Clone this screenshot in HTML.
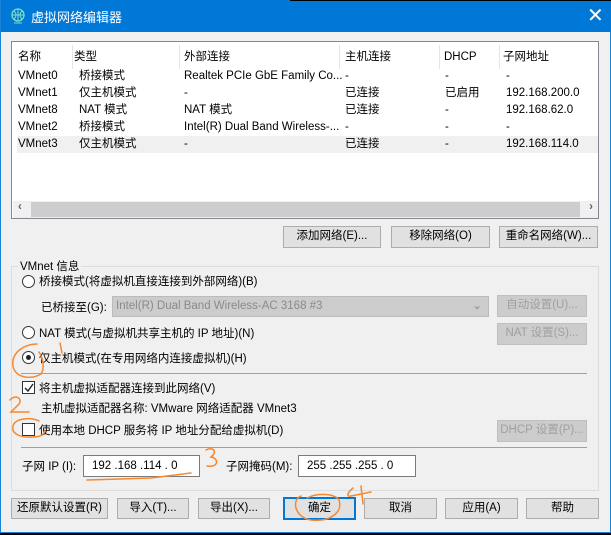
<!DOCTYPE html><html><head><meta charset="utf-8"><style>
*{margin:0;padding:0;box-sizing:border-box}
body{width:611px;height:535px;background:#000;font-family:"Liberation Sans","Noto Sans CJK SC",sans-serif;font-size:11.5px;color:#000;position:relative;overflow:hidden}
.win{position:absolute;left:0;top:0;width:611px;height:533px;background:#f0f0f0;border:1px solid #1883d7;border-top:none}
.title{position:absolute;left:0;top:0;width:611px;height:32px;background:#0078d7;color:#fff;font-size:13px}
.a{position:absolute;white-space:nowrap}
.btn{position:absolute;background:#e1e1e1;border:1px solid #adadad;text-align:center;line-height:19px;font-size:11.5px}
.dis{color:#a0a0a0;background:#ccc;border-color:#bfbfbf}
.list{position:absolute;left:10px;top:41px;width:588px;height:178px;background:#fff;border:1px solid #828790}
.row{position:absolute;left:0;height:17px;width:586px;line-height:17px}
.row span{position:absolute}
.radio{position:absolute;width:13px;height:13px;border:1px solid #333;border-radius:50%;background:#fff}
.cb{position:absolute;width:13px;height:13px;border:1px solid #333;background:#fff}
.edit{position:absolute;background:#fff;border:1px solid #7a7a7a;line-height:20px;padding-left:8px}
</style></head><body>
<div class="win">
<div class="title">
<svg class="a" style="left:9px;top:8px" width="16" height="16" viewBox="0 0 16 16"><circle cx="8" cy="7" r="6" fill="none" stroke="#7fe0c0" stroke-width="1.3"/><path d="M2 7h12M8 1v12M4 3q4 4 0 8M12 3q-4 4 0 8" stroke="#7fe0c0" fill="none"/><path d="M4 15h8" stroke="#7fe0c0"/></svg>
<span class="a" style="left:30px;top:7px">虚拟网络编辑器</span>
<span class="a" style="left:586px;top:3px;font-size:20px;font-weight:300">✕</span>
</div>
<div class="list">
<div class="row" style="top:3px;height:24px;line-height:24px"><span style="left:6px">名称</span><span style="left:62px">类型</span><span style="left:172px">外部连接</span><span style="left:333px">主机连接</span><span style="left:432px">DHCP</span><span style="left:491px">子网地址</span>
<i class="a" style="left:60px;top:0;width:1px;height:24px;background:#e5e5e5"></i><i class="a" style="left:167px;top:0;width:1px;height:24px;background:#e5e5e5"></i><i class="a" style="left:327px;top:0;width:1px;height:24px;background:#e5e5e5"></i><i class="a" style="left:427px;top:0;width:1px;height:24px;background:#e5e5e5"></i><i class="a" style="left:487px;top:0;width:1px;height:24px;background:#e5e5e5"></i></div>
<div class="row" style="top:26px"><span style="left:6px">VMnet0</span><span style="left:67px">桥接模式</span><span style="left:172px">Realtek PCIe GbE Family Co...</span><span style="left:333px">-</span><span style="left:433px">-</span><span style="left:494px">-</span></div>
<div class="row" style="top:43px"><span style="left:6px">VMnet1</span><span style="left:67px">仅主机模式</span><span style="left:172px">-</span><span style="left:333px">已连接</span><span style="left:433px">已启用</span><span style="left:494px">192.168.200.0</span></div>
<div class="row" style="top:60px"><span style="left:6px">VMnet8</span><span style="left:67px">NAT 模式</span><span style="left:172px">NAT 模式</span><span style="left:333px">已连接</span><span style="left:433px">-</span><span style="left:494px">192.168.62.0</span></div>
<div class="row" style="top:77px"><span style="left:6px">VMnet2</span><span style="left:67px">桥接模式</span><span style="left:172px">Intel(R) Dual Band Wireless-...</span><span style="left:333px">-</span><span style="left:433px">-</span><span style="left:494px">-</span></div>
<div class="row" style="top:94px;left:5px;width:581px;background:#f0f0f0"><span style="left:1px">VMnet3</span><span style="left:62px">仅主机模式</span><span style="left:167px">-</span><span style="left:328px">已连接</span><span style="left:428px">-</span><span style="left:489px">192.168.114.0</span></div>
<div class="a" style="left:1px;top:159px;width:585px;height:17px;background:#f0f0f0"><div class="a" style="left:18px;top:1px;width:549px;height:15px;background:#cdcdcd"></div><span class="a" style="left:5px;top:0;color:#606060;font-weight:bold">‹</span><span class="a" style="right:5px;top:0;color:#606060;font-weight:bold">›</span></div>
</div>
<div class="btn" style="left:282px;top:226px;width:98px;height:22px">添加网络(E)...</div>
<div class="btn" style="left:390px;top:226px;width:99px;height:22px">移除网络(O)</div>
<div class="btn" style="left:498px;top:226px;width:99px;height:22px">重命名网络(W)...</div>
<div class="a" style="left:10px;top:266px;width:588px;height:225px;border:1px solid #dcdcdc"></div>
<span class="a" style="left:17px;top:258px;background:#f0f0f0;padding:0 2px">VMnet 信息</span>
<div class="radio" style="left:21px;top:275px"></div><span class="a" style="left:38px;top:273px">桥接模式(将虚拟机直接连接到外部网络)(B)</span>
<span class="a" style="left:40px;top:299px">已桥接至(G):</span>
<div class="a" style="left:111px;top:296px;width:377px;height:21px;background:#ccc;border:1px solid #bbb;color:#8a8a8a;line-height:19px;padding-left:3px">Intel(R) Dual Band Wireless-AC 3168 #3<span class="a" style="right:6px;top:0">⌄</span></div>
<div class="btn dis" style="left:496px;top:295px;width:90px;height:22px">自动设置(U)...</div>
<div class="radio" style="left:21px;top:326px"></div><span class="a" style="left:38px;top:325px">NAT 模式(与虚拟机共享主机的 IP 地址)(N)</span>
<div class="btn dis" style="left:496px;top:323px;width:90px;height:22px">NAT 设置(S)...</div>
<div class="radio" style="left:21px;top:351px"><i class="a" style="left:3px;top:3px;width:5px;height:5px;border-radius:50%;background:#222"></i></div><span class="a" style="left:38px;top:350px">仅主机模式(在专用网络内连接虚拟机)(H)</span>
<div class="a" style="left:20px;top:373px;width:566px;height:1px;background:#a0a0a0"></div>
<div class="cb" style="left:21px;top:381px"><svg class="a" style="left:1px;top:1px" width="10" height="10"><path d="M1 5l3 3 5-7" stroke="#222" stroke-width="1.4" fill="none"/></svg></div><span class="a" style="left:38px;top:380px">将主机虚拟适配器连接到此网络(V)</span>
<span class="a" style="left:40px;top:400px">主机虚拟适配器名称: VMware 网络适配器 VMnet3</span>
<div class="cb" style="left:21px;top:423px"></div><span class="a" style="left:38px;top:422px">使用本地 DHCP 服务将 IP 地址分配给虚拟机(D)</span>
<div class="btn dis" style="left:496px;top:420px;width:90px;height:22px">DHCP 设置(P)...</div>
<div class="a" style="left:20px;top:447px;width:566px;height:1px;background:#a0a0a0"></div>
<span class="a" style="left:21px;top:458px">子网 IP (I):</span>
<div class="edit" style="left:82px;top:455px;width:117px;height:22px">192 .168 .114 .  0</div>
<span class="a" style="left:225px;top:458px">子网掩码(M):</span>
<div class="edit" style="left:297px;top:455px;width:118px;height:22px">255 .255 .255 .  0</div>
<div class="btn" style="left:10px;top:498px;width:97px;height:21px">还原默认设置(R)</div>
<div class="btn" style="left:116px;top:498px;width:72px;height:21px">导入(T)...</div>
<div class="btn" style="left:197px;top:498px;width:72px;height:21px">导出(X)...</div>
<div class="btn" style="left:282px;top:497px;width:73px;height:23px;border:2px solid #0078d7;line-height:19px">确定</div>
<div class="btn" style="left:363px;top:498px;width:73px;height:21px">取消</div>
<div class="btn" style="left:444px;top:498px;width:73px;height:21px">应用(A)</div>
<div class="btn" style="left:525px;top:498px;width:73px;height:21px">帮助</div>
<svg class="a" style="left:0;top:0" width="611" height="535" viewBox="0 0 611 535" fill="none" stroke="#f7882f" stroke-width="1.5" stroke-linecap="round">
<path d="M36 344C24 344 10 352 12 366C14 378 30 380 40 374C44 368 42 358 38 352"/><path d="M59 343l2 10"/>
<path d="M9 400C14 394 22 398 18 404L10 412L28 412"/>
<path d="M38 421C30 417 14 418 12 426C10 434 20 438 32 437C40 437 44 434 44 430"/>
<path d="M86 480L150 478L190 473"/>
<path d="M205 450C212 446 217 452 210 457C218 458 218 468 206 466"/>
<path d="M352 488C345 494 346 497 350 496L370 492M360 486L362 504"/>
<path d="M300 496C290 500 294 518 310 520C330 522 342 512 338 500C334 494 318 492 306 498"/>
</svg>
</div>
<div class="a" style="left:290px;top:0;width:321px;height:1px;background:#000"></div>
</body></html>
